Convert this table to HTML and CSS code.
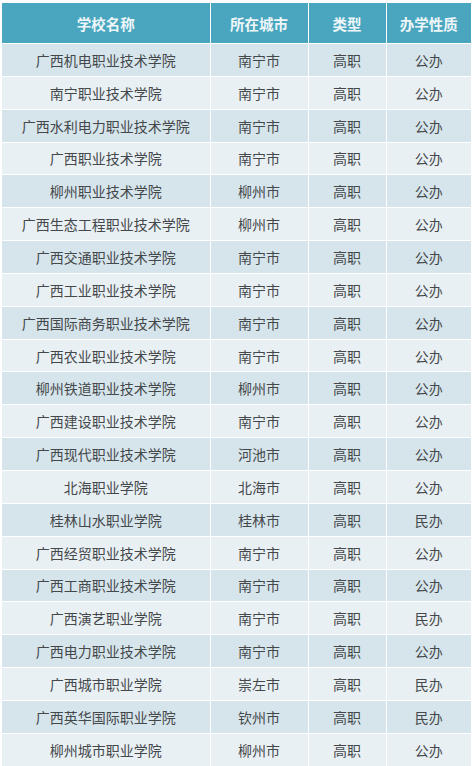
FILE: index.html
```html
<!DOCTYPE html>
<html lang="zh">
<head>
<meta charset="utf-8">
<link rel="stylesheet" href="styles.css">
</head>
<body>
<table class="schools">
  <colgroup>
    <col class="c1"><col class="c2"><col class="c3"><col class="c4">
  </colgroup>
  <thead>
    <tr><th>学校名称</th><th>所在城市</th><th>类型</th><th>办学性质</th></tr>
  </thead>
  <tbody>
    <tr><td>广西机电职业技术学院</td><td>南宁市</td><td>高职</td><td>公办</td></tr>
    <tr><td>南宁职业技术学院</td><td>南宁市</td><td>高职</td><td>公办</td></tr>
    <tr><td>广西水利电力职业技术学院</td><td>南宁市</td><td>高职</td><td>公办</td></tr>
    <tr><td>广西职业技术学院</td><td>南宁市</td><td>高职</td><td>公办</td></tr>
    <tr><td>柳州职业技术学院</td><td>柳州市</td><td>高职</td><td>公办</td></tr>
    <tr><td>广西生态工程职业技术学院</td><td>柳州市</td><td>高职</td><td>公办</td></tr>
    <tr><td>广西交通职业技术学院</td><td>南宁市</td><td>高职</td><td>公办</td></tr>
    <tr><td>广西工业职业技术学院</td><td>南宁市</td><td>高职</td><td>公办</td></tr>
    <tr><td>广西国际商务职业技术学院</td><td>南宁市</td><td>高职</td><td>公办</td></tr>
    <tr><td>广西农业职业技术学院</td><td>南宁市</td><td>高职</td><td>公办</td></tr>
    <tr><td>柳州铁道职业技术学院</td><td>柳州市</td><td>高职</td><td>公办</td></tr>
    <tr><td>广西建设职业技术学院</td><td>南宁市</td><td>高职</td><td>公办</td></tr>
    <tr><td>广西现代职业技术学院</td><td>河池市</td><td>高职</td><td>公办</td></tr>
    <tr><td>北海职业学院</td><td>北海市</td><td>高职</td><td>公办</td></tr>
    <tr><td>桂林山水职业学院</td><td>桂林市</td><td>高职</td><td>民办</td></tr>
    <tr><td>广西经贸职业技术学院</td><td>南宁市</td><td>高职</td><td>公办</td></tr>
    <tr><td>广西工商职业技术学院</td><td>南宁市</td><td>高职</td><td>公办</td></tr>
    <tr><td>广西演艺职业学院</td><td>南宁市</td><td>高职</td><td>民办</td></tr>
    <tr><td>广西电力职业技术学院</td><td>南宁市</td><td>高职</td><td>公办</td></tr>
    <tr><td>广西城市职业学院</td><td>崇左市</td><td>高职</td><td>民办</td></tr>
    <tr><td>广西英华国际职业学院</td><td>钦州市</td><td>高职</td><td>民办</td></tr>
    <tr><td>柳州城市职业学院</td><td>柳州市</td><td>高职</td><td>公办</td></tr>
  </tbody>
</table>
</body>
</html>
```

FILE: styles.css
```css
html, body {
  margin: 0;
  padding: 0;
  background: #ffffff;
}
body {
  padding: 3px 0 0 2px;
  font-family: "Noto Sans CJK SC", "Noto Sans", sans-serif;
}
.schools {
  border-collapse: collapse;
  table-layout: fixed;
  width: 469px;
}
.c1 { width: 208px; }
.c2 { width: 98px; }
.c3 { width: 78px; }
.c4 { width: 85px; }
.schools th,
.schools td {
  border: 1px solid #ffffff;
  text-align: center;
  padding: 0;
  white-space: nowrap;
  overflow: hidden;
}
.schools th {
  border-top: none;
  height: 40px;
  background: #4aa6bf;
  color: #eef6f9;
  font-size: 14.5px;
  font-weight: 700;
}
.schools td {
  height: 31.85px;
  font-size: 14px;
  font-weight: 400;
  color: #45484b;
}
.schools tbody tr:nth-child(odd) td { background: #d6e5eb; }
.schools tbody tr:nth-child(even) td { background: #e9f0f4; }
.schools tr > :first-child { border-left: none; }
.schools tr > :last-child { border-right: none; }
```
